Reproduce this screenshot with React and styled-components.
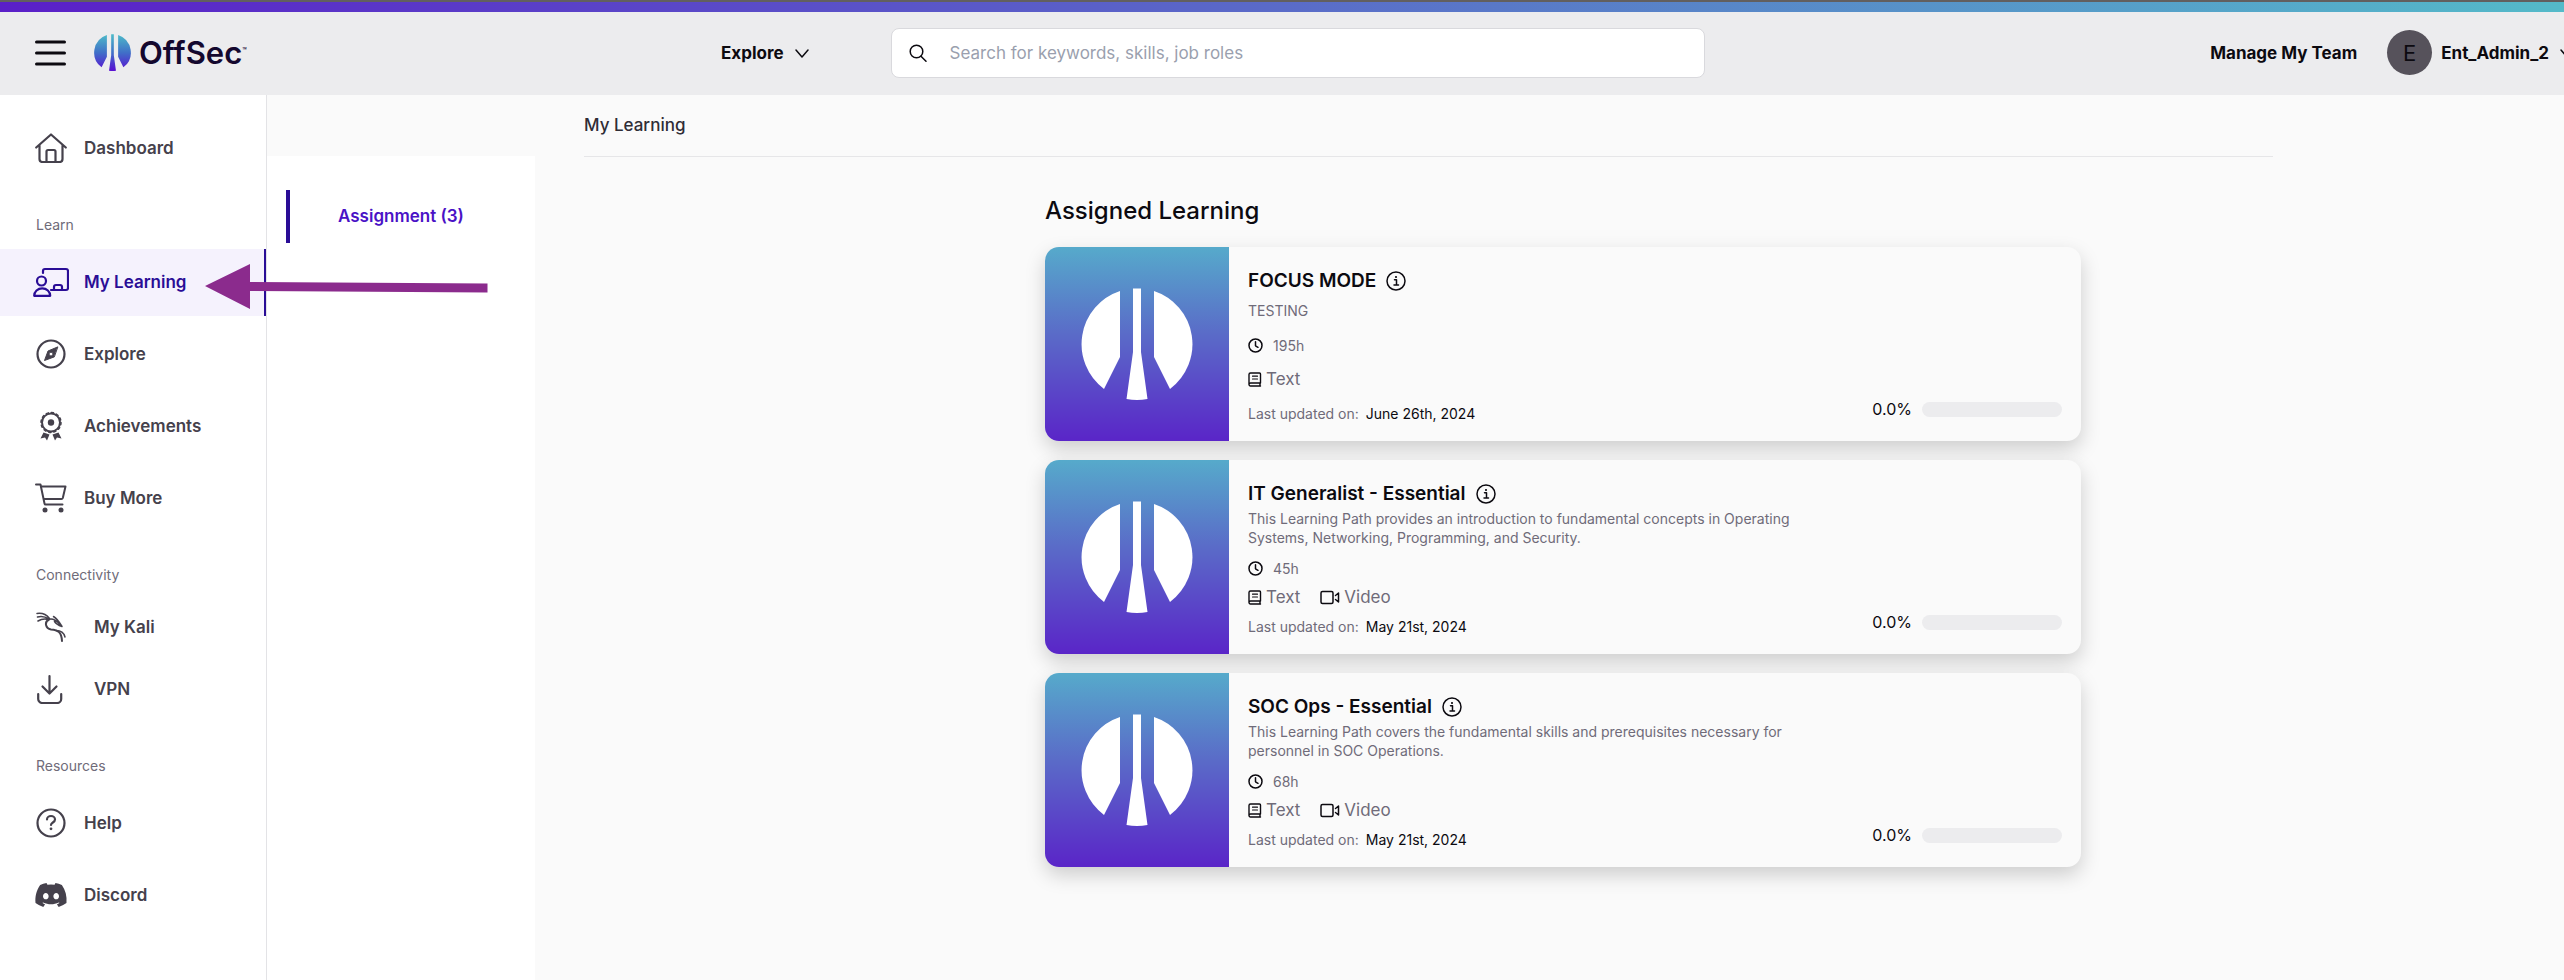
import React from 'react';
import styled, { createGlobalStyle } from 'styled-components';
import { FaDiscord } from 'react-icons/fa';

const GlobalStyle = createGlobalStyle`
  :root {
    --color-text: #0c0a10;
    --color-nav: #45414c;
    --color-muted: #6f6b79;
    --color-brand: #2a0d96;
    --color-line: #e3e3e6;
    --color-grey: #ececee;
    --color-page: #fafafa;
  }

  * {
    box-sizing: border-box;
  }

  body {
    margin: 0;
    background: var(--color-page);
    color: var(--color-text);
    font-family: Inter, "Liberation Sans", sans-serif;
    font-size: 17px;
    overflow-x: hidden;
  }

  button,
  input {
    font: inherit;
    color: inherit;
  }

  a {
    color: inherit;
    text-decoration: none;
  }
`;

const Page = styled.div`
  display: flex;
  flex-direction: column;
  min-height: 100vh;
`;

const Stripe = styled.div`
  height: 12px;
  border-top: 2px solid #625f5f;
  background: linear-gradient(90deg, #5a1fc8, #5a6bc8 50%, #54bac9);
`;

const Header = styled.header`
  display: flex;
  align-items: center;
  height: 83px;
  padding: 0 0 2px 35px;
  background: var(--color-grey);
  overflow: hidden;
`;

const PlainButton = styled.button`
  display: flex;
  align-items: center;
  padding: 0;
  border: 0;
  background: none;
  cursor: pointer;
`;

const Brand = styled.div`
  display: flex;
  align-items: center;
  gap: 28px;
  flex: 0 1 686px;
`;

const BrandLink = styled.a`
  display: flex;
  align-items: center;
  gap: 8px;
  color: #14082e;
  font-size: 31px;
  font-weight: 600;
  line-height: 40px;

  sup {
    font-size: 7px;
    line-height: 7px;
  }
`;

const MenuButton = styled(PlainButton)`
  gap: 11px;
  font-weight: 700;
  white-space: nowrap;
`;

const SearchBox = styled.label`
  display: flex;
  align-items: center;
  gap: 23px;
  flex: 0 1 814px;
  height: 50px;
  margin-left: 82px;
  padding: 0 17px;
  border: 1px solid #d9d9dd;
  border-radius: 8px;
  background: #fff;

  input {
    flex: 1;
    border: 0;
    outline: none;
    padding: 0;
    background: none;
  }

  input::placeholder {
    color: #9a9fae;
    opacity: 1;
  }
`;

const Account = styled.div`
  display: flex;
  align-items: center;
  gap: 30px;
  margin-left: auto;
  margin-right: -10px;
  font-weight: 700;
  white-space: nowrap;
`;

const Avatar = styled.span`
  display: flex;
  align-items: center;
  justify-content: center;
  width: 45px;
  height: 45px;
  margin-right: -2px;
  border-radius: 50%;
  background: #56525b;
  font-size: 22px;
  font-weight: 400;
`;

const Body = styled.div`
  display: flex;
  flex: 1;
`;

const Sidebar = styled.nav`
  flex: 0 0 267px;
  padding-top: 20px;
  border-right: 1px solid var(--color-line);
  background: #fff;
`;

const NavHeading = styled.h2`
  display: flex;
  align-items: center;
  height: 67px;
  margin: 0;
  padding: 17px 0 0 36px;
  color: var(--color-muted);
  font-size: 14px;
  font-weight: 400;
`;

const NavList = styled.div`
  display: flex;
  flex-direction: column;
  gap: 5px;
  padding-bottom: ${(props) => (props.$compact ? '5px' : '0')};
`;

const NavItem = styled.a`
  position: relative;
  display: flex;
  align-items: center;
  gap: ${(props) => (props.$compact ? '27px' : '17px')};
  height: ${(props) => (props.$compact ? '57px' : '67px')};
  padding: 0 0 2px 35px;
  border-right: ${(props) => (props.$active ? '2px solid var(--color-brand)' : '0')};
  background: ${(props) => (props.$active ? '#f5f2fd' : 'none')};
  color: ${(props) => (props.$active ? 'var(--color-brand)' : 'var(--color-nav)')};
  font-weight: 600;
`;

const IconSlot = styled.span`
  display: flex;
  align-items: center;
  justify-content: center;
  width: 32px;

  svg {
    flex: none;
  }
`;

/* lies over the sidebar and the panel next to it */
const Pointer = styled.svg`
  position: absolute;
  left: 205px;
  top: 14px;
  z-index: 2;
`;

const SubNav = styled.aside`
  flex: 0 0 268px;
  margin-top: 61px;
  padding: 34px 19px;
  background: #fff;
`;

const Tab = styled.a`
  display: flex;
  align-items: center;
  justify-content: center;
  height: 53px;
  padding: 0 4px 2px 0;
  border-left: 4px solid var(--color-brand);
  color: #4a12c6;
  font-weight: 600;
`;

const Main = styled.main`
  flex: 1;
  padding: 0 291px 60px 49px;
`;

const Crumb = styled.div`
  display: flex;
  align-items: center;
  height: 62px;
  padding-bottom: 2px;
  border-bottom: 1px solid #e6e6e8;
  color: #2f2c35;
  font-weight: 500;
`;

const Section = styled.section`
  max-width: 1036px;
  margin-left: auto;
  margin-right: 192px;
  padding-top: 36px;

  h1 {
    margin: 0 0 18px;
    font-size: 24px;
    font-weight: 500;
    line-height: 36px;
  }
`;

const CardList = styled.div`
  display: flex;
  flex-direction: column;
  gap: 19px;
`;

const Card = styled.article`
  display: flex;
  height: 194px;
  border-radius: 14px;
  background: var(--color-page);
  box-shadow: 0 8px 20px rgba(0, 0, 0, 0.18);
  overflow: hidden;
`;

const Cover = styled.div`
  display: flex;
  align-items: center;
  justify-content: center;
  flex: 0 0 184px;
  background: linear-gradient(#56aacb, #5a6bc8 45%, #5a25c8);
`;

const CardBody = styled.div`
  display: flex;
  flex-direction: column;
  justify-content: space-between;
  flex: 0 1 600px;
  padding: 22px 20px 10px 19px;
  color: var(--color-muted);

  h2 {
    display: flex;
    align-items: center;
    gap: 10px;
    margin: 0;
    color: var(--color-text);
    font-size: 19px;
    font-weight: 600;
    line-height: 24px;
  }

  p {
    margin: 0;
    font-size: 14px;
    line-height: 19px;
  }
`;

const Row = styled.div`
  display: flex;
  align-items: center;
  height: ${(props) => (props.$slim ? '16px' : '36px')};
  gap: ${(props) => props.$gap || '7px'};
  font-size: ${(props) => (props.$slim ? '17px' : '14px')};

  time,
  svg {
    color: var(--color-text);
  }
`;

const Format = styled.span`
  display: flex;
  align-items: center;
  gap: 4px;
`;

const Progress = styled.div`
  display: flex;
  align-items: center;
  align-self: flex-end;
  gap: 10px;
  margin-left: auto;
  padding: 0 19px 21px 0;
  font-size: 16px;
  line-height: 22px;
`;

const Track = styled.div`
  width: 140px;
  height: 15px;
  border-radius: 8px;
  background: var(--color-grey);
  overflow: hidden;
`;

const Fill = styled.div`
  height: 100%;
  background: var(--color-brand);
`;

function Line({ width, height, stroke = 2, children }) {
  return (
    <svg
      width={width}
      height={height}
      viewBox={`0 0 ${width} ${height}`}
      fill="none"
      stroke="currentColor"
      strokeWidth={stroke}
      strokeLinecap="round"
      strokeLinejoin="round"
      aria-hidden="true"
    >
      {children}
    </svg>
  );
}

function Mark({ size, fill }) {
  return (
    <svg width={size} height={size} viewBox="0 0 112 112" aria-hidden="true">
      <defs>
        <linearGradient id="mark" gradientUnits="userSpaceOnUse" x1="0" y1="0" x2="0" y2="112">
          <stop offset="0" stopColor="#4dbdc9" />
          <stop offset="0.5" stopColor="#4070c8" />
          <stop offset="1" stopColor="#5a0fd2" />
        </linearGradient>
      </defs>
      <g fill={fill}>
        <path d="M39 3A56 56 0 0 0 23 101L39 69Z" />
        <path d="M73 3A56 56 0 0 1 89 101L73 69Z" />
        <path d="M52 0.5H60V64L66.5 111Q56 113 45.5 111L52 64Z" />
      </g>
    </svg>
  );
}

const HomeIcon = () => (
  <Line width={32} height={30} stroke={2.2}>
    <path d="M1.2 14.5 16 1.5 30.8 14.5M4.5 12v14a3 3 0 0 0 3 3h17a3 3 0 0 0 3-3V12" />
    <path d="M11.5 29V18.5a1.5 1.5 0 0 1 1.5-1.5h6a1.5 1.5 0 0 1 1.5 1.5V29" />
  </Line>
);

const TeachIcon = () => (
  <Line width={36} height={30} stroke={2.2}>
    <path d="M10 6V4a2 2 0 0 1 2-2h21a2 2 0 0 1 2 2v17a2 2 0 0 1-2 2H18" />
    <path d="M21 23v-3a2 2 0 0 1 2-2h4a2 2 0 0 1 2 2v3" />
    <circle cx="8.5" cy="14" r="4.5" />
    <path d="M1.2 28.8a8 7.5 0 0 1 16 0Z" />
  </Line>
);

const CompassIcon = () => (
  <Line width={30} height={30} stroke={2.2}>
    <circle cx="15" cy="15" r="13.5" />
    <path
      d="M21.5 8 12 12 8.5 21.5 18 18ZM15 13a2 2 0 1 1 0 4 2 2 0 0 1 0-4Z"
      fill="currentColor"
      fillRule="evenodd"
      strokeWidth="1"
    />
  </Line>
);

const AwardIcon = () => (
  <Line width={24} height={30}>
    <circle cx="12" cy="11.5" r="9" />
    <circle cx="12" cy="11.5" r="10" strokeWidth="1.5" strokeDasharray="2.2 3.04" />
    <circle cx="12" cy="11.5" r="3.2" fill="currentColor" stroke="none" />
    <path
      d="M4.5 21.5 10.5 23.5 8 29.5 6 26.5 1.5 27.5ZM19.5 21.5 13.5 23.5 16 29.5 18 26.5 22.5 27.5Z"
      fill="currentColor"
      stroke="none"
    />
  </Line>
);

const CartIcon = () => (
  <Line width={32} height={30}>
    <path d="M1 1.5H5.5L9.5 20.5a1.2 1.2 0 0 0 1.2 1H27.5" />
    <path d="M6 3.5H30.5L27.8 15a1.5 1.5 0 0 1-1.5 1H9" />
    <circle cx="10" cy="27" r="2.5" fill="currentColor" stroke="none" />
    <circle cx="26" cy="27" r="2.5" fill="currentColor" stroke="none" />
  </Line>
);

const DragonIcon = () => (
  <Line width={30} height={30} stroke={1.5}>
    <path d="M1 1.5C6 .8 10 2 13.500 6.500M1.500 5C6 3.500 9 4.500 13 7M2 9C6 6.500 9 6.500 12.500 7.500" />
    <path d="M12.500 7.500C17 6 20.500 8.500 26 14.500 22 13 20 12 18.500 9.500M17.500 4.500C21 6.500 23 9.500 26 14.500" />
    <path d="M13 7.500C8 10 9.500 16.500 15 17.500 22 18 25.500 20 26 29" strokeWidth="2" />
    <path d="M20 18.500C25 18.500 28 21 29 25" />
  </Line>
);

const DownloadIcon = () => (
  <Line width={28} height={30} stroke={2.2}>
    <path d="M12.5 2v17M5.5 12.5l7 7 7-7" />
    <path d="M1.2 20v5a4 4 0 0 0 4 4h15a4 4 0 0 0 4-4v-5" />
  </Line>
);

const HelpIcon = () => (
  <Line width={30} height={30} stroke={2.2}>
    <circle cx="15" cy="15" r="13.5" />
    <path d="M11 11.5a4 3.5 0 0 1 8 0c0 3-4 3-4 5.5" />
    <circle cx="15" cy="20.8" r="1.4" fill="currentColor" stroke="none" />
  </Line>
);

const InfoIcon = () => (
  <Line width={20} height={20} stroke={1.5}>
    <circle cx="10" cy="10" r="9" />
    <path d="M8.5 8.8h2v5M8 14h4.5" />
    <circle cx="10" cy="6" r="1.1" fill="currentColor" stroke="none" />
  </Line>
);

const ClockIcon = () => (
  <Line width={15} height={15} stroke={1.5}>
    <circle cx="7.5" cy="7.5" r="6.5" />
    <path d="M7.5 3.8v4l2.5 1.5" />
  </Line>
);

const BookIcon = () => (
  <Line width={14} height={15} stroke={1.4}>
    <path d="M12.5 11V2a1 1 0 0 0-1-1H2.5a1.5 1.5 0 0 0-1.5 1.5v10M12.5 11H2.5a1.5 1.5 0 0 0 0 3h10M12 11v3" />
    <path d="M4.5 4.2h5M4.5 7h5" strokeWidth="1.2" />
  </Line>
);

const VideoIcon = () => (
  <Line width={20} height={15} stroke={1.5}>
    <rect x="1" y="1.5" width="12" height="12" rx="1.5" />
    <path d="M15.5 5.5 18.5 3v9l-3-2.5" />
  </Line>
);

const SearchIcon = () => (
  <Line width={18} height={18} stroke={1.5}>
    <circle cx="7.5" cy="7.5" r="6.3" />
    <path d="M12 12.2 17 17.2" />
  </Line>
);

const ChevronIcon = () => (
  <Line width={14} height={14} stroke={1.5}>
    <path d="M1 4 7 11 13 4" />
  </Line>
);

const navSections = [
  { items: [{ label: 'Dashboard', icon: <HomeIcon /> }] },
  {
    heading: 'Learn',
    items: [
      { label: 'My Learning', icon: <TeachIcon />, active: true },
      { label: 'Explore', icon: <CompassIcon /> },
      { label: 'Achievements', icon: <AwardIcon /> },
      { label: 'Buy More', icon: <CartIcon /> },
    ],
  },
  {
    heading: 'Connectivity',
    compact: true,
    items: [
      { label: 'My Kali', icon: <DragonIcon /> },
      { label: 'VPN', icon: <DownloadIcon /> },
    ],
  },
  {
    heading: 'Resources',
    items: [
      { label: 'Help', icon: <HelpIcon /> },
      { label: 'Discord', icon: <FaDiscord size={34} /> },
    ],
  },
];

const courses = [
  {
    title: 'FOCUS MODE',
    text: 'TESTING',
    hours: '195h',
    formats: ['Text'],
    updated: 'June 26th, 2024',
    progress: 0,
  },
  {
    title: 'IT Generalist - Essential',
    text: 'This Learning Path provides an introduction to fundamental concepts in Operating Systems, Networking, Programming, and Security.',
    hours: '45h',
    formats: ['Text', 'Video'],
    updated: 'May 21st, 2024',
    progress: 0,
  },
  {
    title: 'SOC Ops - Essential',
    text: 'This Learning Path covers the fundamental skills and prerequisites necessary for personnel in SOC Operations.',
    hours: '68h',
    formats: ['Text', 'Video'],
    updated: 'May 21st, 2024',
    progress: 0,
  },
];

function TopBar() {
  return (
    <Header>
      <Brand>
        <PlainButton type="button" aria-label="Menu">
          <Line width={31} height={26} stroke={3}>
            <path d="M1.5 2h28M1.5 13h28M1.5 24h28" />
          </Line>
        </PlainButton>
        <BrandLink href="#home">
          <Mark size={37} fill="url(#mark)" />
          <span>
            OffSec<sup>™</sup>
          </span>
        </BrandLink>
      </Brand>
      <MenuButton type="button">
        Explore
        <ChevronIcon />
      </MenuButton>
      <SearchBox>
        <SearchIcon />
        <input
          type="search"
          aria-label="Search"
          placeholder="Search for keywords, skills, job roles"
        />
      </SearchBox>
      <Account>
        <a href="#team">Manage My Team</a>
        <MenuButton type="button">
          <Avatar>E</Avatar>
          Ent_Admin_2
          <ChevronIcon />
        </MenuButton>
      </Account>
    </Header>
  );
}

function SideNav() {
  return (
    <Sidebar>
      {navSections.map(({ heading, compact, items }) => (
        <React.Fragment key={heading || 'top'}>
          {heading && <NavHeading>{heading}</NavHeading>}
          <NavList $compact={compact}>
            {items.map(({ label, icon, active }) => (
              <NavItem key={label} href={`#${label}`} $active={active} $compact={compact}>
                <IconSlot>{icon}</IconSlot>
                {label}
                {active && (
                  <Pointer width="283" height="46" viewBox="0 0 283 46" fill="#8b2b8d" aria-hidden="true">
                    <path d="M0 23 45 1V19L282.5 20.5V29.5L45 28V46Z" />
                  </Pointer>
                )}
              </NavItem>
            ))}
          </NavList>
        </React.Fragment>
      ))}
    </Sidebar>
  );
}

function CourseCard({ course }) {
  return (
    <Card>
      <Cover>
        <Mark size={112} fill="#fff" />
      </Cover>
      <CardBody>
        <h2>
          {course.title}
          <InfoIcon />
        </h2>
        <p>{course.text}</p>
        <Row $gap="10px">
          <ClockIcon />
          {course.hours}
        </Row>
        <Row $slim $gap="20px">
          {course.formats.map((format) => (
            <Format key={format}>
              {format === 'Video' ? <VideoIcon /> : <BookIcon />}
              {format}
            </Format>
          ))}
        </Row>
        <Row>
          Last updated on: <time>{course.updated}</time>
        </Row>
      </CardBody>
      <Progress>
        {course.progress.toFixed(1)}%
        <Track>
          <Fill style={{ width: `${course.progress}%` }} />
        </Track>
      </Progress>
    </Card>
  );
}

function App() {
  return (
    <Page>
      <GlobalStyle />
      <Stripe />
      <TopBar />
      <Body>
        <SideNav />
        <SubNav>
          <Tab href="#assignment">Assignment (3)</Tab>
        </SubNav>
        <Main>
          <Crumb>My Learning</Crumb>
          <Section>
            <h1>Assigned Learning</h1>
            <CardList>
              {courses.map((course) => (
                <CourseCard key={course.title} course={course} />
              ))}
            </CardList>
          </Section>
        </Main>
      </Body>
    </Page>
  );
}

export default App;
